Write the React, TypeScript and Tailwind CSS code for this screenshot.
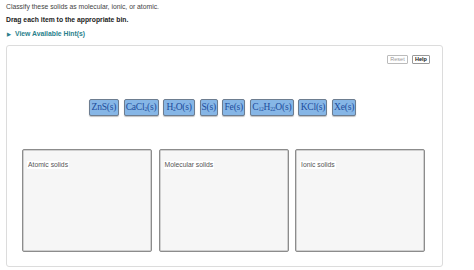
import React from 'react';

type Chip = { w: string; parts: [string, string?][] };

// each part: [text, subscript?]
const chips: Chip[] = [
    { w: 'w-[30px]', parts: [['ZnS(s)']] },
    { w: 'w-[35px]', parts: [['CaCl', '2'], ['(s)']] },
    { w: 'w-[32px]', parts: [['H', '2'], ['O(s)']] },
    { w: 'w-[18px]', parts: [['S(s)']] },
    { w: 'w-[23px]', parts: [['Fe(s)']] },
    { w: 'w-[44px]', parts: [['C', '12'], ['H', '22'], ['O(s)']] },
    { w: 'w-[29px]', parts: [['KCl(s)']] },
    { w: 'w-[24px]', parts: [['Xe(s)']] },
];

const bins = ['Atomic solids', 'Molecular solids', 'Ionic solids'];

export default function App() {
    return (
        <div className="w-[474px] h-[270px] bg-white px-[6px] font-['Liberation_Sans',Arial,sans-serif] overflow-hidden">
            {/* instructions */}
            <p className="pt-[3px] text-[6.8px] leading-[8px] text-[#444]">Classify these solids as molecular, ionic, or atomic.</p>
            <p className="mt-[5px] text-[6.8px] leading-[8px] font-bold text-[#222]">Drag each item to the appropriate bin.</p>
            <div className="mt-[6px] flex items-center gap-[4px] pl-[1px] text-[6.8px] leading-[8px] font-bold text-[#2a7f8c]">
                <span className="text-[5px]">▶</span>
                <span>View Available Hint(s)</span>
            </div>

            {/* panel */}
            <div className="mt-[7px] w-[437px] h-[222px] border border-[#dcdcdc] rounded-[3px] flex flex-col">
                <div className="mt-[9px] pr-[12px] flex justify-end gap-[4px]">
                    <button className="h-[9px] w-[21px] border border-[#bbb] rounded-[1px] text-[5.5px] leading-[7px] text-[#999] bg-white">Reset</button>
                    <button className="h-[9px] w-[18px] border border-[#999] rounded-[1px] text-[5.5px] leading-[7px] font-bold text-[#222] bg-white">Help</button>
                </div>

                {/* draggable items */}
                <div className="mt-[35px] flex justify-center gap-[4.6px] pr-[4px]">
                    {chips.map((c, i) => (
                        <div
                            key={i}
                            className={`${c.w} h-[17px] flex items-center justify-center rounded-[2px] border border-[#6d7d90] bg-[#86b6e6] shadow-[0_1px_1px_rgba(0,0,0,0.25)] text-[9.5px] tracking-[-0.2px] text-[#1c4c9c] font-['Liberation_Serif',serif] whitespace-nowrap`}
                        >
                            {c.parts.map(([t, s], j) => (
                                <React.Fragment key={j}>
                                    {t}
                                    {s && <sub className="text-[5.5px] bottom-[-1px]">{s}</sub>}
                                </React.Fragment>
                            ))}
                        </div>
                    ))}
                </div>

                {/* bins */}
                <div className="mt-[33px] pl-[15px] flex gap-[6.5px]">
                    {bins.map((b) => (
                        <div key={b} className="w-[130px] h-[103px] border border-[#8c8c8c] rounded-[2px] bg-[#f6f6f6] shadow-[inset_0_0_0_0.5px_#aaa]">
                            <span className="inline-block mt-[2px] ml-[4px] px-[1px] bg-white text-[6.8px] leading-[8px] text-[#555]">{b}</span>
                        </div>
                    ))}
                </div>
            </div>
        </div>
    );
}
